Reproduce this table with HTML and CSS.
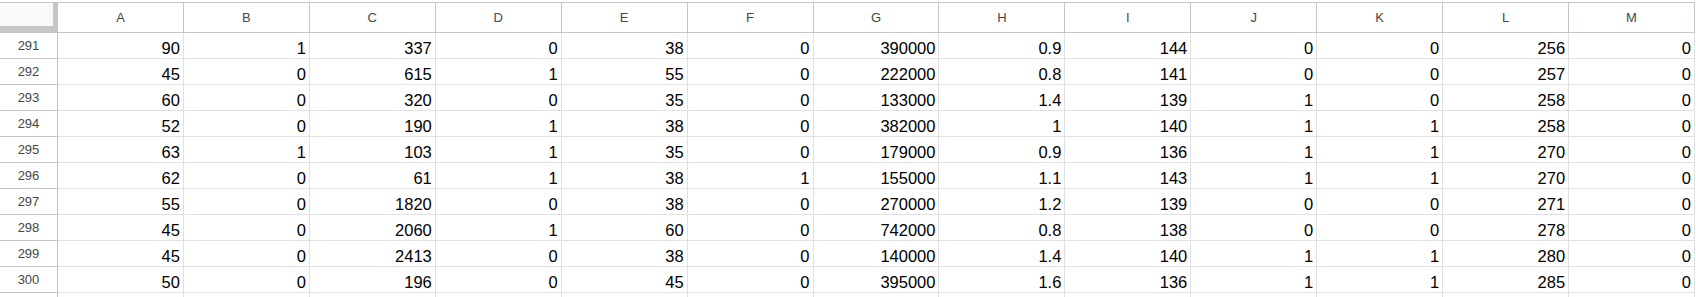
FILE: index.html
```html
<!DOCTYPE html>
<html>
<head>
<meta charset="utf-8">
<link rel="stylesheet" href="styles.css">
</head>
<body>
<div class="sheet">
  <div class="corner"></div>
  <div class="col-head">A</div><div class="col-head">B</div><div class="col-head">C</div><div class="col-head">D</div><div class="col-head">E</div><div class="col-head">F</div><div class="col-head">G</div><div class="col-head">H</div><div class="col-head">I</div><div class="col-head">J</div><div class="col-head">K</div><div class="col-head">L</div><div class="col-head">M</div>

  <div class="row-head">291</div><div class="cell">90</div><div class="cell">1</div><div class="cell">337</div><div class="cell">0</div><div class="cell">38</div><div class="cell">0</div><div class="cell">390000</div><div class="cell">0.9</div><div class="cell">144</div><div class="cell">0</div><div class="cell">0</div><div class="cell">256</div><div class="cell">0</div>
  <div class="row-head">292</div><div class="cell">45</div><div class="cell">0</div><div class="cell">615</div><div class="cell">1</div><div class="cell">55</div><div class="cell">0</div><div class="cell">222000</div><div class="cell">0.8</div><div class="cell">141</div><div class="cell">0</div><div class="cell">0</div><div class="cell">257</div><div class="cell">0</div>
  <div class="row-head">293</div><div class="cell">60</div><div class="cell">0</div><div class="cell">320</div><div class="cell">0</div><div class="cell">35</div><div class="cell">0</div><div class="cell">133000</div><div class="cell">1.4</div><div class="cell">139</div><div class="cell">1</div><div class="cell">0</div><div class="cell">258</div><div class="cell">0</div>
  <div class="row-head">294</div><div class="cell">52</div><div class="cell">0</div><div class="cell">190</div><div class="cell">1</div><div class="cell">38</div><div class="cell">0</div><div class="cell">382000</div><div class="cell">1</div><div class="cell">140</div><div class="cell">1</div><div class="cell">1</div><div class="cell">258</div><div class="cell">0</div>
  <div class="row-head">295</div><div class="cell">63</div><div class="cell">1</div><div class="cell">103</div><div class="cell">1</div><div class="cell">35</div><div class="cell">0</div><div class="cell">179000</div><div class="cell">0.9</div><div class="cell">136</div><div class="cell">1</div><div class="cell">1</div><div class="cell">270</div><div class="cell">0</div>
  <div class="row-head">296</div><div class="cell">62</div><div class="cell">0</div><div class="cell">61</div><div class="cell">1</div><div class="cell">38</div><div class="cell">1</div><div class="cell">155000</div><div class="cell">1.1</div><div class="cell">143</div><div class="cell">1</div><div class="cell">1</div><div class="cell">270</div><div class="cell">0</div>
  <div class="row-head">297</div><div class="cell">55</div><div class="cell">0</div><div class="cell">1820</div><div class="cell">0</div><div class="cell">38</div><div class="cell">0</div><div class="cell">270000</div><div class="cell">1.2</div><div class="cell">139</div><div class="cell">0</div><div class="cell">0</div><div class="cell">271</div><div class="cell">0</div>
  <div class="row-head">298</div><div class="cell">45</div><div class="cell">0</div><div class="cell">2060</div><div class="cell">1</div><div class="cell">60</div><div class="cell">0</div><div class="cell">742000</div><div class="cell">0.8</div><div class="cell">138</div><div class="cell">0</div><div class="cell">0</div><div class="cell">278</div><div class="cell">0</div>
  <div class="row-head">299</div><div class="cell">45</div><div class="cell">0</div><div class="cell">2413</div><div class="cell">0</div><div class="cell">38</div><div class="cell">0</div><div class="cell">140000</div><div class="cell">1.4</div><div class="cell">140</div><div class="cell">1</div><div class="cell">1</div><div class="cell">280</div><div class="cell">0</div>
  <div class="row-head">300</div><div class="cell">50</div><div class="cell">0</div><div class="cell">196</div><div class="cell">0</div><div class="cell">45</div><div class="cell">0</div><div class="cell">395000</div><div class="cell">1.6</div><div class="cell">136</div><div class="cell">1</div><div class="cell">1</div><div class="cell">285</div><div class="cell">0</div>
  <div class="row-head"></div><div class="cell"></div><div class="cell"></div><div class="cell"></div><div class="cell"></div><div class="cell"></div><div class="cell"></div><div class="cell"></div><div class="cell"></div><div class="cell"></div><div class="cell"></div><div class="cell"></div><div class="cell"></div><div class="cell"></div>
</div>
</body>
</html>
```

FILE: styles.css
```css
html, body {
  margin: 0;
  padding: 0;
  background: #fff;
  overflow: hidden;
}

body {
  padding-top: 2px;
  font-family: "Liberation Sans", Arial, sans-serif;
}

.sheet {
  display: grid;
  grid-template-columns: 58px repeat(13, 1fr);
  grid-template-rows: 30px repeat(11, 26px);
  width: 1695px;
  border-top: 1px solid #c4c7c5;
}

.corner {
  background: #f8f9fa;
  border-right: 1px solid #c4c7c5;
  border-bottom: 1px solid #c4c7c5;
  box-shadow: inset -4px -6px 0 #c4c7c5;
}

.col-head {
  display: flex;
  align-items: center;
  justify-content: center;
  border-right: 1px solid #c4c7c5;
  border-bottom: 1px solid #c4c7c5;
  color: #444746;
  font-size: 13px;
}

.row-head {
  display: flex;
  align-items: center;
  justify-content: center;
  border-right: 1px solid #c4c7c5;
  border-bottom: 1px solid #c4c7c5;
  color: #444746;
  font-size: 13px;
}

.cell {
  display: flex;
  align-items: flex-end;
  justify-content: flex-end;
  padding: 0 3px 2px 3px;
  border-right: 1px solid #e1e1e1;
  border-bottom: 1px solid #e1e1e1;
  color: #000;
  font-size: 16.5px;
  line-height: 16px;
}
```
